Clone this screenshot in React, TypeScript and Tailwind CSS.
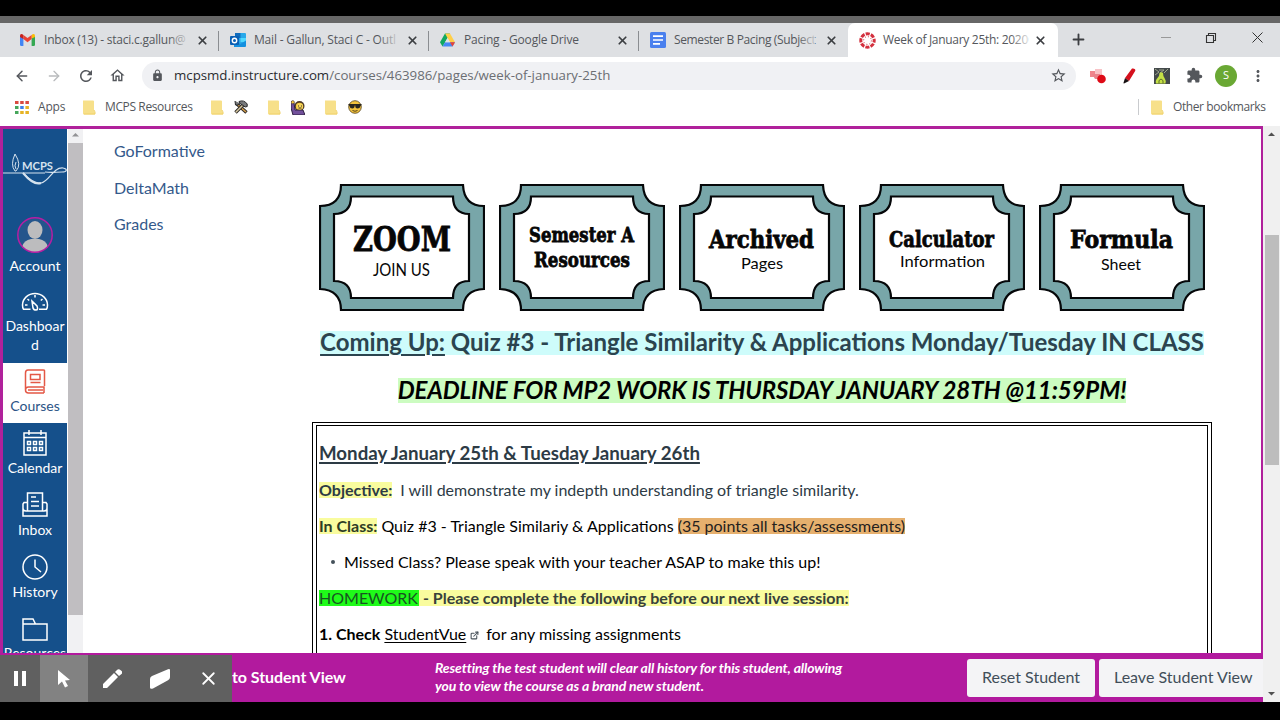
import type { ReactNode } from "react";
import { ArrowLeft, ArrowRight, X, Plus, ExternalLink } from "lucide-react";
import { MdRefresh, MdOutlineHome, MdLock, MdStarBorder, MdExtension, MdMoreVert } from "react-icons/md";

function GmailIcon() {
  return (
    <svg width="15" height="12" viewBox="0 0 15 12">
      <path d="M0 2v8.5Q0 12 1.2 12H3.4V4z" fill="#4285f4" />
      <path d="M15 2v8.5q0 1.5-1.2 1.5h-2.2V4z" fill="#34a853" />
      <path d="M11.600 4.500V.9l1-.6Q15-.6 15 2v1z" fill="#fbbc04" />
      <path d="M3.400 5V.9l4.100 3.100 4.100-3.100V5L7.500 8.200z" fill="#ea4335" />
      <path d="M0 3V2Q0-.6 2.400.3l1 .6V5z" fill="#c5221f" />
    </svg>
  );
}

function OutlookIcon() {
  return (
    <svg width="17" height="16" viewBox="0 0 17 16">
      <rect x="5" y="1" width="11" height="13" rx="1" fill="#28a8ea" />
      <path d="M5 1h5.500v5H5z" fill="#0f6cbd" />
      <path d="M10.500 6H16v4h-5.500z" fill="#50d9ff" />
      <path d="M4 15V9l6.500 3L16 8.500V14q0 1-1 1z" fill="#1490df" />
      <rect x="0" y="4" width="9" height="9" rx="1" fill="#0a5fb4" />
      <circle cx="4.500" cy="8.500" r="2.200" fill="none" stroke="#fff" strokeWidth="1.400" />
    </svg>
  );
}

function DriveIcon() {
  return (
    <svg width="15" height="14" viewBox="0 0 15 14">
      <path d="M5 .5h5L5 9.500 2.500 13.500 0 9.300z" fill="#11a861" />
      <path d="M5 .5h5l5 8.800h-5z" fill="#ffcf48" />
      <path d="M5 9.300h10l-2.500 4.200h-10z" fill="#4688f4" />
      <path d="M10 9.300h5l-2.500 4.200z" fill="#ea4335" />
      <path d="M7.500 5l2.500 4.300H5z" fill="#e0e2e4" />
    </svg>
  );
}

function DocsIcon() {
  return (
    <svg width="16" height="16" viewBox="0 0 16 16">
      <rect width="16" height="16" rx="1.500" fill="#4a80ee" />
      <path d="M3 4.200h10M3 8h10M3 11.800h7" stroke="#fff" strokeWidth="1.700" />
    </svg>
  );
}

function CanvasIcon() {
  return (
    <svg width="17" height="17" viewBox="0 0 17 17">
      <circle cx="8.500" cy="8.500" r="6.700" fill="none" stroke="#d3303e" strokeWidth="3" strokeDasharray="4.060 1.200" strokeDashoffset="2" />
      <circle cx="8.500" cy="8.500" r="3.900" fill="none" stroke="#d3303e" strokeWidth="1" strokeDasharray="1 2.060" />
    </svg>
  );
}

function Tab({ icon, title, width, track, fade }: { icon: ReactNode; title: string; width: string; track: string; fade: string }) {
  return (
    <div className={`flex h-full items-center ${width}`}>
      <div className="flex w-[24px] shrink-0 items-center">{icon}</div>
      <div className={`relative whitespace-nowrap ${track}`}>
        {title}
        {fade && <div className={`absolute inset-y-0 right-0 w-[18px] bg-linear-to-r from-transparent ${fade}`} />}
      </div>
      <X size={13} strokeWidth={3.200} className="ml-auto shrink-0 text-[#3c3e42]" />
    </div>
  );
}

function TabStrip() {
  return (
    <div className="flex h-[34px] bg-[#dee0e3] pl-[20px] text-[12px] text-[#54575c]">
      <Tab icon={<GmailIcon />} title="Inbox (13) - staci.c.gallun@" width="w-[189px]" track="tracking-[-0.220px]" fade="to-[#dee0e3]/80" />
      <div className="mt-[8px] h-[20px] w-px ml-[9px] bg-[#8a8d91]" />
      <div className="ml-[11px] flex">
        <Tab icon={<OutlookIcon />} title="Mail - Gallun, Staci C - Outl" width="w-[189px]" track="tracking-[-0.180px]" fade="to-[#dee0e3]/80" />
      </div>
      <div className="mt-[8px] h-[20px] w-px ml-[9px] bg-[#8a8d91]" />
      <div className="ml-[11px] flex">
        <Tab icon={<DriveIcon />} title="Pacing - Google Drive" width="w-[189px]" track="tracking-[-0.180px]" fade="" />
      </div>
      <div className="mt-[8px] h-[20px] w-px ml-[9px] bg-[#8a8d91]" />
      <div className="ml-[11px] flex">
        <Tab icon={<DocsIcon />} title="Semester B Pacing (Subject" width="w-[188px]" track="tracking-[-0.370px]" fade="to-[#dee0e3]/80" />
      </div>
      <div className="ml-[10px] flex h-full w-[210px] rounded-t-[7px] bg-white pl-[11px] pr-[10px]">
        <Tab icon={<CanvasIcon />} title="Week of January 25th: 2020" width="w-[188px]" track="tracking-[-0.300px]" fade="to-white/80" />
      </div>
      <Plus size={17} strokeWidth={2.600} className="ml-[12px] mt-[8px] text-[#3c3e42]" />
      <svg width="110" height="16" viewBox="0 0 110 16" className="ml-[69px] mt-[7px]" fill="none" stroke="#333" strokeWidth="1">
        <path d="M5 7.500h10" stroke="#999" />
        <path d="M50.500 5.500h7v7h-7z M52.500 5.500v-2h7v7h-2" strokeWidth="1.100" />
        <path d="M96.500 2.500l10 10M106.500 2.500l-10 10" />
      </svg>
    </div>
  );
}

function AddressBar() {
  return (
    <div className="flex h-[36px] items-center bg-white pt-px text-[#54575c]">
      <ArrowLeft size={16} strokeWidth={2.200} className="ml-[14px]" />
      <ArrowRight size={16} strokeWidth={2} className="ml-[16px] text-[#b9bbbd]" />
      <MdRefresh size={18} className="ml-[15px]" />
      <MdOutlineHome size={17} className="ml-[14px]" />
      <div className="ml-[16px] flex h-[28px] w-[934px] items-center rounded-full bg-[#f0f1f4] pl-[9px] pr-[9px]">
        <MdLock size={13} />
        <div className="ml-[10px] text-[13.300px] whitespace-nowrap text-[#6b6e73] tracking-[-0.020px]">
          <span className="text-[#2b2d31]">mcpsmd.instructure.com</span>/courses/463986/pages/week-of-january-25th
        </div>
        <MdStarBorder size={17} className="ml-auto" />
      </div>
      <svg width="17" height="16" viewBox="0 0 17 16" className="ml-[14px]">
        <path d="M0 3h5v6H0z" fill="#f0848c" />
        <path d="M5 1h7v6H5z" fill="#f8c3c7" />
        <path d="M2 6h8v5H5z" fill="#e9828a" />
        <circle cx="11.500" cy="11" r="4.300" fill="#de0a16" />
      </svg>
      <svg width="14" height="16" viewBox="0 0 14 16" className="ml-[16px]">
        <path d="M9 .6q1.500-.6 3 .6.8.8 0 2L6 13l-4-3z" fill="#d5101d" />
        <path d="M2 10l4 3-5 2.600q-.8 0-.5-.8z" fill="#181113" />
      </svg>
      <svg width="16" height="16" viewBox="0 0 16 16" className="ml-[17px]">
        <rect width="16" height="16" fill="#43494b" />
        <path d="M1 1l4 3-4 3M5 2h5l-4 3M14 1l-4 4" stroke="#9da58c" fill="none" />
        <path d="M5.500 5q2-1.500 3.500 0 0 3 1.500 5 2 3 1 5.500H2q-1-3 1.500-5.500Q5.500 8 5.500 5z" fill="#c4e046" />
        <path d="M5 15.500v-3l2-1.500 2 1.500v3" stroke="#5f6f2a" fill="none" />
      </svg>
      <MdExtension size={17} className="ml-[16px]" />
      <div className="ml-[12px] flex h-[22px] w-[22px] items-center justify-center rounded-full bg-[#6aa834] text-[11px] text-white">S</div>
      <MdMoreVert size={18} className="ml-[12px]" />
    </div>
  );
}

function Folder({ className }: { className: string }) {
  return (
    <svg width="14" height="15" viewBox="0 0 14 15" className={className}>
      <path d="M1 .5h10q1 0 1 1v10l1 1v2H2q-1 0-1-1z" fill="#f7e08a" />
      <path d="M12 10l1 2v2H2" stroke="#f0d26a" fill="none" />
    </svg>
  );
}

function Bookmarks() {
  return (
    <div className="flex h-[33px] items-start bg-white pt-[6px] text-[12px] text-[#54575c]">
      <div className="flex h-[16px] w-full items-center">
        <svg width="14" height="13" viewBox="0 0 14 13" className="ml-[15px]">
          <path d="M0 0h3.500v3H0zM5.200 0h3.500v3H5.200zM10.400 0h3.500v3h-3.500z" fill="#d94a40" />
          <path d="M0 5h3.500v3H0z" fill="#45a65a" />
          <path d="M5.200 5h3.500v3H5.200z" fill="#4080e8" />
          <path d="M10.400 5h3.500v3h-3.500zM5.200 10h3.500v3H5.200zM10.400 10h3.500v3h-3.500z" fill="#e6b325" />
          <path d="M0 10h3.500v3H0z" fill="#45a65a" />
        </svg>
        <span className="ml-[9px] w-[28px] whitespace-nowrap tracking-[-0.200px]">Apps</span>
        <Folder className="ml-[16px]" />
        <span className="ml-[9px] w-[88px] whitespace-nowrap tracking-[-0.380px]">MCPS Resources</span>
        <Folder className="ml-[17px]" />
        <svg width="14" height="14" viewBox="0 0 14 14" className="ml-[10px]">
          <path d="M3 4l9.500 8.500" stroke="#2c2a28" strokeWidth="3.400" />
          <path d="M4 5l8 7" stroke="#d9a04a" strokeWidth="1.500" />
          <path d="M1.500 12.500L10 4" stroke="#2c2a28" strokeWidth="3.400" />
          <path d="M1.800 12.200L9 5" stroke="#d9c9a0" strokeWidth="1.500" />
          <path d="M5 1.500q5-2 8.200 2.500v2.500l-2 .5-5-3.500zM1 1l.5 4h3l1-2" fill="#77797b" stroke="#29292a" />
        </svg>
        <Folder className="ml-[19px]" />
        <svg width="14" height="15" viewBox="0 0 14 15" className="ml-[10px]">
          <circle cx="8.500" cy="6" r="5" fill="#4d3925" />
          <circle cx="8.500" cy="6.500" r="3.700" fill="#f3c83f" />
          <path d="M0 2q2-2 3 1l1 7h8l2 5H2L0 8z" fill="#72509b" stroke="#2d203f" />
          <circle cx="1.800" cy="2.200" r="1.600" fill="#f3c83f" stroke="#2d203f" strokeWidth=".5" />
          <circle cx="9" cy="6.500" r="3" fill="#f7d75b" />
          <path d="M7 6h1M10 6h1M7.500 8h3" stroke="#3f2b20" />
        </svg>
        <Folder className="ml-[19px]" />
        <svg width="14" height="14" viewBox="0 0 14 14" className="ml-[10px]">
          <circle cx="7" cy="7" r="6.300" fill="#f3c33d" stroke="#55421a" strokeWidth=".8" />
          <path d="M.5 4h13v1l-1 1q-.5 2.500-3 2.500T7.300 5.500h-.6q0 3-2.400 3T1.500 6l-1-1z" fill="#29261f" />
          <path d="M4.500 10.500q2.500 1.500 5 0" stroke="#55421a" fill="none" />
        </svg>
        <div className="ml-auto h-[16px] w-px bg-[#c9cbce]" />
        <Folder className="ml-[11px]" />
        <span className="ml-[9px] w-[107px] whitespace-nowrap tracking-[-0.400px]">Other bookmarks</span>
      </div>
    </div>
  );
}

function Sidebar() {
  const stroke = { fill: "none", stroke: "#fff", strokeWidth: 1.500 };
  return (
    <nav className="flex h-full w-[64px] shrink-0 flex-col items-center overflow-hidden bg-[#15508b] text-[14px] leading-[19px] text-white">
      <svg width="64" height="36" viewBox="0 0 64 36" className="mt-[22px] shrink-0" fill="none" stroke="#d5e2ee">
        <path d="M0 22h42" strokeWidth="1.200" />
        <path d="M12 20q-5-6 0-17 7 11 1 17zM13 18q-2-3 0-7" />
        <path d="M20 22q10 11 18 10c8-1 12-16 22-15 5 1 4 4-1 4-6 0-10 1-17 0" strokeWidth="1.200" />
        <path d="M20 22q11 13 18 10" strokeWidth="2" />
        <text x="19" y="18.500" textLength="31" lengthAdjust="spacingAndGlyphs" className="font-['Lato'] text-[11px] font-bold" fill="#d5e2ee" stroke="none">MCPS</text>
      </svg>
      <svg width="36" height="36" viewBox="0 0 36 36" className="mt-[30px] shrink-0">
        <circle cx="18" cy="18" r="17.200" fill="#24558c" />
        <path d="M5 30q2-7 9-8h8q7 1 9 8-13 11-26 0z" fill="#bcbcbe" />
        <ellipse cx="18" cy="13" rx="7.500" ry="9" fill="#bcbcbe" />
        <circle cx="18" cy="18" r="17.200" fill="none" stroke="#b71da3" strokeWidth="1.500" />
      </svg>
      <span className="mt-[3px] h-[19px]">Account</span>
      <svg width="28" height="19" viewBox="0 0 28 19" className="mt-[17px] shrink-0" {...stroke}>
        <path d="M9.500 17.300H2.500Q1.500 16 1.500 13a12.500 11.500 0 0 1 25 0q0 3-1 4.300H18" />
        <path d="M11 9l5 5q1.500 4-1 4t-3-2zM14 3v2.500M6.500 7l1.700 1.500M21.500 7l-1.700 1.500M4 13h2.500M21.500 13H24" />
      </svg>
      <span className="mt-[5px] h-[38px] text-center">Dashboar<br />d</span>
      <div className="mt-[9px] flex h-[60px] w-full shrink-0 flex-col items-center bg-white text-[#2b5486]">
        <svg width="22" height="25" viewBox="0 0 22 25" className="mt-[6px] shrink-0" fill="none" stroke="#e45846" strokeWidth="1.500">
          <path d="M20.500 17V1.500Q20.500 1 19 1H4Q1.500 1 1.500 4v17q0 3 3 3H20M4.500 18H20v6M4 21h15M4.500 18q-3 0-3 3M6.500 5.500h9.500v5H6.500zM6.500 13.500h10" />
        </svg>
        <span className="mt-[2px]">Courses</span>
      </div>
      <svg width="24" height="26" viewBox="0 0 24 26" className="mt-[7px] shrink-0" {...stroke}>
        <path d="M1 3h22v22H1zM1 7.500h22M6 0v5M18 0v5M4.500 11.500h3v3h-3zM10.500 11.500h3v3h-3zM16.500 11.500h3v3h-3zM4.500 17.500h3v3h-3zM10.500 17.500h3v3h-3zM16.500 17.500h3v3h-3z" />
      </svg>
      <span className="mt-[2px] h-[19px]">Calendar</span>
      <svg width="26" height="25" viewBox="0 0 26 25" className="mt-[15px] shrink-0" {...stroke}>
        <path d="M5.500 19V1h15v18M5.500 10.500H2L1 12v12h24V12l-1-1.500h-3.500M1 16q0 3 3 3h18q3 0 3-3M9 5h5M9 9.500h8M9 14h8" />
      </svg>
      <span className="mt-[3px] h-[19px]">Inbox</span>
      <svg width="26" height="26" viewBox="0 0 26 26" className="mt-[15px] shrink-0" {...stroke}>
        <circle cx="13" cy="13" r="12" />
        <path d="M13 5.500V13l6 5" />
      </svg>
      <span className="mt-[2px] h-[19px]">History</span>
      <svg width="26" height="23" viewBox="0 0 26 23" className="mt-[17px] shrink-0" {...stroke}>
        <path d="M1 22V1h10l2.500 5H25v16zM1 6h12.500" />
      </svg>
      <span className="mt-[2px] whitespace-nowrap">Resources</span>
    </nav>
  );
}

type PlaqueLine = { text: string; x: number; y: number; w: number; kind: "title" | "note"; size: string };

function Plaque({ lines }: { lines: PlaqueLine[] }) {
  return (
    <svg width="166" height="128" viewBox="0 0 166 128" className="shrink-0" stroke="#050709" strokeWidth="2.200">
      <path d="M22 1H144Q145 22 165 22V105Q144 106 144 126H22Q22 106 1 105V22Q22 22 22 1z" fill="#78a6a9" />
      <path d="M32 12.500H134Q134 30 150 30V97Q134 97 134 114H32Q32 97 15 97V30Q32 30 32 12.500z" fill="#fff" />
      {lines.map((l) => (
        <text
          key={l.text}
          x={l.x}
          y={l.y}
          textLength={l.w}
          lengthAdjust="spacingAndGlyphs"
          fill="#060606"
          stroke={l.kind === "note" ? "none" : "#060606"}
          strokeWidth={l.kind === "note" ? 0 : 0.8}
          className={`${l.size} ${l.kind === "note" ? "font-['Lato']" : "font-['DejaVu_Serif'] font-bold"}`}
        >
          {l.text}
        </text>
      ))}
    </svg>
  );
}

const plaques: PlaqueLine[][] = [
  [
    { text: "ZOOM", x: 34, y: 67, w: 98, kind: "title", size: "text-[34px]" },
    { text: "JOIN US", x: 54, y: 91.500, w: 57, kind: "note", size: "text-[17px]" },
  ],
  [
    { text: "Semester A", x: 30, y: 58, w: 105, kind: "title", size: "text-[21px]" },
    { text: "Resources", x: 35, y: 83, w: 96, kind: "title", size: "text-[21px]" },
  ],
  [
    { text: "Archived", x: 30, y: 64, w: 105, kind: "title", size: "text-[24px]" },
    { text: "Pages", x: 62, y: 85, w: 42, kind: "note", size: "text-[16px]" },
  ],
  [
    { text: "Calculator", x: 30, y: 63, w: 105, kind: "title", size: "text-[22px]" },
    { text: "Information", x: 41, y: 83, w: 85, kind: "note", size: "text-[16px]" },
  ],
  [
    { text: "Formula", x: 31, y: 64, w: 103, kind: "title", size: "text-[25px]" },
    { text: "Sheet", x: 62, y: 85.500, w: 40, kind: "note", size: "text-[16px]" },
  ],
];

function Content() {
  return (
    <main className="flex h-full w-[900px] shrink-0 flex-col overflow-hidden text-[16px] text-[#2d3b45]">
      <div className="mt-[54px] flex shrink-0 gap-[14px] pt-px pl-[7px]">
        {plaques.map((lines) => (
          <Plaque key={lines[0].text} lines={lines} />
        ))}
      </div>
      <div className="mt-[19px] flex h-[24px] shrink-0 justify-center text-[24px] leading-[22px] font-bold">
        <span className="bg-[#cefcfb] whitespace-nowrap text-[#2b444f]"><span className="underline decoration-2 underline-offset-[3px]">Coming Up:</span> Quiz #3 - Triangle Similarity &amp; Applications Monday/Tuesday IN CLASS</span>
      </div>
      <div className="mt-[23px] flex h-[25px] shrink-0 justify-center text-[24px] leading-[23px] font-bold tracking-[-0.120px] text-black italic">
        <span className="bg-[#ccfcc1] whitespace-nowrap">DEADLINE FOR MP2 WORK IS THURSDAY JANUARY 28TH @11:59PM!</span>
      </div>
      <div className="mt-[19px] h-[260px] w-[900px] shrink-0 border border-black px-[3px] py-[2px]">
        <div className="flex h-full flex-col border border-black pl-[2px] whitespace-nowrap">
          <h3 className="mt-[15px] h-[24px] text-[18.700px] leading-[24px] font-bold underline decoration-2 underline-offset-2">Monday January 25th &amp; Tuesday January 26th</h3>
          <p className="mt-[17px] flex h-[16px] leading-[16px]"><b className="bg-[#f9fc9e]">Objective:</b><span className="ml-[8px]">I will demonstrate my indepth understanding of triangle similarity.</span></p>
          <p className="mt-[20px] flex h-[16px] leading-[16px] text-black"><b className="bg-[#f9fc9e] text-[#2d3b25]">In Class:</b><span className="ml-[4px]">Quiz #3 - Triangle Similariy &amp; Applications</span><span className="ml-[4px] bg-[#e6b06e] text-[#24211d]">(35 points all tasks/assessments)</span></p>
          <p className="mt-[20px] flex h-[16px] items-center leading-[16px] text-black"><span className="ml-[12px] mr-[9px] h-[4px] w-[4px] rounded-full bg-[#44515a]" />Missed Class? Please speak with your teacher ASAP to make this up!</p>
          <p className="mt-[20px] flex h-[16px] leading-[16px]"><span className="bg-[#1ffb19] pr-px text-[#185322]">HOMEWORK</span><b className="bg-[#f9fc9e] pl-[4px] text-[#38413b]">- Please complete the following before our next live session:</b></p>
          <p className="mt-[20px] flex h-[18px] leading-[16px] text-black"><b>1. Check</b><span className="ml-[4px] underline underline-offset-2">StudentVue</span><ExternalLink size={9} strokeWidth={2.800} className="mt-[5px] ml-[4px] text-[#47515a]" /><span className="ml-[7px]">for any missing assignments</span></p>
        </div>
      </div>
    </main>
  );
}

function RecorderBar() {
  return (
    <div className="absolute top-[655px] left-0 flex h-[47px] w-[232px] bg-[#606060]">
      <div className="flex w-[40px] items-center justify-center"><svg width="12" height="15" viewBox="0 0 12 15"><path d="M0 0h4v15H0zM8 0h4v15H8z" fill="#fff" /></svg></div>
      <div className="flex w-[48px] items-center justify-center bg-[#828282]"><svg width="12" height="18" viewBox="0 0 12 18"><path d="M0 0v15l4-3.500 3 6 3-1.500-3-5.500 5-.5z" fill="#fff" /></svg></div>
      <div className="flex w-[48px] items-center justify-center"><svg width="19" height="19" viewBox="0 0 19 19"><path d="M0 19v-4L11 4l4 4L4 19zM12 3l2-2q1.500-1.500 4 .5t.5 3.500L16 7z" fill="#fff" /></svg></div>
      <div className="flex w-[48px] items-center justify-center"><svg width="20" height="20" viewBox="0 0 20 20"><path d="M0 10q0-2 2-3L18 .3q2-.8 2 1v7q0 2-2 3L3 19.500q-3 1-3-1z" fill="#fff" /></svg></div>
      <div className="flex w-[48px] items-center justify-center"><X size={21} strokeWidth={2.100} className="text-white" /></div>
    </div>
  );
}

export default function App() {
  return (
    <div className="relative flex h-[720px] w-[1280px] flex-col overflow-hidden bg-black pt-[16px] font-['Open_Sans','Noto_Sans',sans-serif]">
      <div className="h-[7px] bg-[#676767]" />
      <TabStrip />
      <AddressBar />
      <Bookmarks />
      <div className="flex h-[576px] font-['Lato',sans-serif]">
        <div className="flex w-[1263px] flex-col">
          <div className="flex h-[527px] border-t-3 border-r-2 border-l-3 border-[#b0219b] bg-white">
            <Sidebar />
            <div className="ml-px flex h-full w-[15px] shrink-0 flex-col items-center bg-[#f1f1f3]">
              <svg width="15" height="14" viewBox="0 0 15 14" className="shrink-0"><path d="M4 7.500l3.500-3.500L11 7.500z" fill="#929295" /></svg>
              <div className="h-[472px] w-full bg-[#c0bec1]" />
            </div>
            <div className="flex w-[229px] shrink-0 flex-col gap-[17px] pt-[12px] pl-[31px] text-[16px] leading-[19.500px] text-[#34598b]">
              <span>GoFormative</span>
              <span>DeltaMath</span>
              <span>Grades</span>
            </div>
            <Content />
          </div>
          <div className="flex h-[49px] bg-[#b21a9e] text-white">
            <div className="mt-[14px] ml-[232px] w-[203px] text-[16px] leading-[20px] font-bold tracking-[-0.050px] whitespace-nowrap">to Student View</div>
            <div className="mt-[6px] w-[532px] text-[14px] leading-[18px] font-bold tracking-[-0.120px] whitespace-nowrap italic">Resetting the test student will clear all history for this student, allowing<br />you to view the course as a brand new student.</div>
            <button className="mt-[6px] flex h-[38px] w-[128px] items-center justify-center rounded-[3px] bg-[#f4f4f6] pb-[2px] text-[16px] whitespace-nowrap text-[#414e59]">Reset Student</button>
            <button className="mt-[6px] ml-[4px] flex h-[38px] w-[164px] items-center rounded-l-[3px] bg-[#f4f4f6] pb-[2px] pl-[15px] text-[16px] whitespace-nowrap text-[#414e59]">Leave Student View</button>
          </div>
        </div>
        <div className="flex w-[17px] flex-col items-center bg-[#f0f0f0]">
          <svg width="15" height="109" viewBox="0 0 15 109" className="shrink-0"><path d="M4 10l3.500-3.500L11 10z" fill="#505050" /></svg>
          <div className="h-[230px] w-[14px] bg-[#bdbdbd]" />
          <svg width="15" height="16" viewBox="0 0 15 16" className="mt-auto"><path d="M4 6l3.500 3.500L11 6z" fill="#505050" /></svg>
        </div>
      </div>
      <RecorderBar />
    </div>
  );
}
